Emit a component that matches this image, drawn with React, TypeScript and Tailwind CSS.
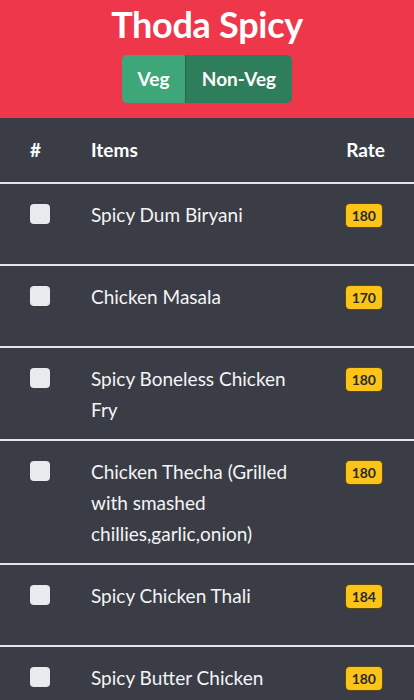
import React from "react";

const items = [
  { name: "Spicy Dum Biryani", rate: 180 },
  { name: "Chicken Masala", rate: 170 },
  { name: "Spicy Boneless Chicken Fry", rate: 180 },
  { name: "Chicken Thecha (Grilled with smashed chillies,garlic,onion)", rate: 180 },
  { name: "Spicy Chicken Thali", rate: 184 },
  { name: "Spicy Butter Chicken", rate: 180 },
];

export default function App() {
  return (
    <div className="min-h-[700px] w-[414px] bg-[#3a3d46] font-['Lato','Open_Sans',sans-serif] text-white overflow-hidden">
      <div className="bg-[#ef374b] flex flex-col items-center h-[118px]">
        <h1 className="text-[36px] font-bold leading-[48px] tracking-[-0.3px]">Thoda Spicy</h1>
        <div className="mt-[7px] flex rounded-[5px] overflow-hidden h-[48px] text-[19px] font-bold">
          <button className="w-[63px] bg-[#3da779] text-white">Veg</button>
          <button className="w-[107px] bg-[#2e7e5b] text-white border-l border-[#27694c]">Non-Veg</button>
        </div>
      </div>

      <div className="flex items-center h-[64px] pl-[30px] pr-[29px] text-[19px] font-bold">
        <div className="w-[61px]">#</div>
        <div className="flex-1">Items</div>
        <div>Rate</div>
      </div>

      {items.map((item) => (
        <div key={item.name} className="border-t-2 border-[#e4e5e8]">
          <div className="flex items-start min-h-[80px] pt-[15px] pb-[14px] pl-[30px] pr-[32px]">
            <div className="w-[61px] pt-[5px]">
              <div className="w-[20px] h-[20px] rounded-[4px] bg-[#e9eaee]" />
            </div>
            <div className="flex-1">
              <div className="w-[212px] text-[19px] leading-[31px] text-[#f4f4f5]">{item.name}</div>
            </div>
            <div className="pt-[4px]">
              <span className="inline-block rounded-[4px] bg-[#fcc419] px-[6px] h-[23px] leading-[23px] text-[14px] font-bold text-[#2a2a2a] shadow-[0_0_0_1px_#5a4a10]">
                {item.rate}
              </span>
            </div>
          </div>
        </div>
      ))}
    </div>
  );
}
